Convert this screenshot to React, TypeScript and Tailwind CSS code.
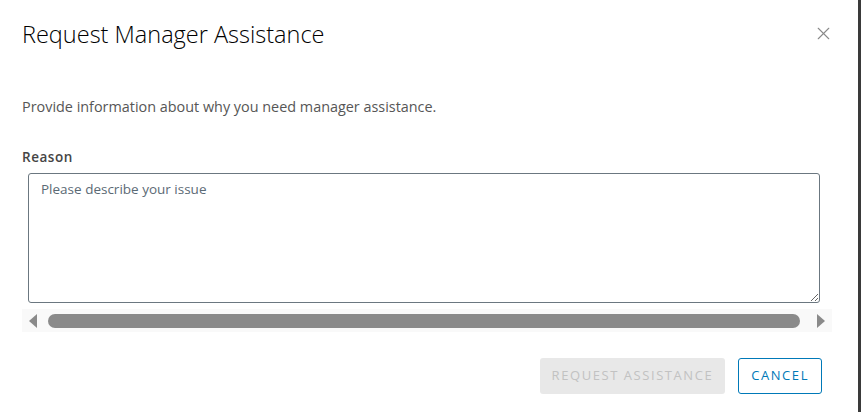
import { X } from "lucide-react";

export default function App() {
  return (
    <div className="flex h-[412px] w-[861px] bg-[#3a3a3a] font-['Open_Sans',sans-serif]">
      <div className="flex w-[858px] flex-col bg-white">
        {/* header */}
        <div className="flex items-start justify-between pl-[22px] pr-[24px] pt-[19px]">
          <h1 className="text-[23.5px] font-light leading-[31px] text-[#000]">Request Manager Assistance</h1>
          <button className="mt-[4px] text-[#8a8a8a]">
            <X className="h-[21px] w-[21px]" strokeWidth={1.3} />
          </button>
        </div>

        <p className="mt-[47px] pl-[22px] text-[14.4px] leading-[20px] text-[#565656]">
          Provide information about why you need manager assistance.
        </p>

        <label className="mt-[32px] pl-[22px] text-[13.5px] font-semibold leading-[16px] tracking-[0.04em] text-[#454545]">
          Reason
        </label>

        <div className="mt-[8px] pl-[28px] pr-[38px]">
          <textarea
            placeholder="Please describe your issue"
            className="block h-[130px] w-full resize-y rounded-[3px] border border-[#6b7780] px-[12px] py-[6px] text-[13.5px] leading-[18px] text-[#333] outline-none placeholder:text-[#5b6a75]"
          />
        </div>

        {/* horizontal scrollbar */}
        <div className="ml-[22px] mr-[26px] mt-[6px] flex h-[23px] items-center gap-[10px] bg-[#f9f9f9] px-[6px]">
          <svg width="10" height="14" viewBox="0 0 10 14" className="shrink-0">
            <path d="M9 0 L9 14 L1 7 Z" fill="#8a8a8a" />
          </svg>
          <div className="h-[14px] flex-1 rounded-full bg-[#8a8a8a]" />
          <svg width="10" height="14" viewBox="0 0 10 14" className="ml-[6px] shrink-0">
            <path d="M1 0 L1 14 L9 7 Z" fill="#8a8a8a" />
          </svg>
        </div>

        {/* footer */}
        <div className="mt-[26px] flex justify-end gap-[13px] pr-[36px]">
          <button
            disabled
            className="h-[36px] rounded-[3px] bg-[#e8e8e8] px-[12px] text-[13px] font-medium tracking-[0.12em] text-[#c2c2c2]"
          >
            REQUEST ASSISTANCE
          </button>
          <button className="h-[36px] rounded-[3px] border border-[#0079b8] px-[12px] text-[13px] font-medium tracking-[0.12em] text-[#0079b8]">
            CANCEL
          </button>
        </div>
      </div>
    </div>
  );
}
